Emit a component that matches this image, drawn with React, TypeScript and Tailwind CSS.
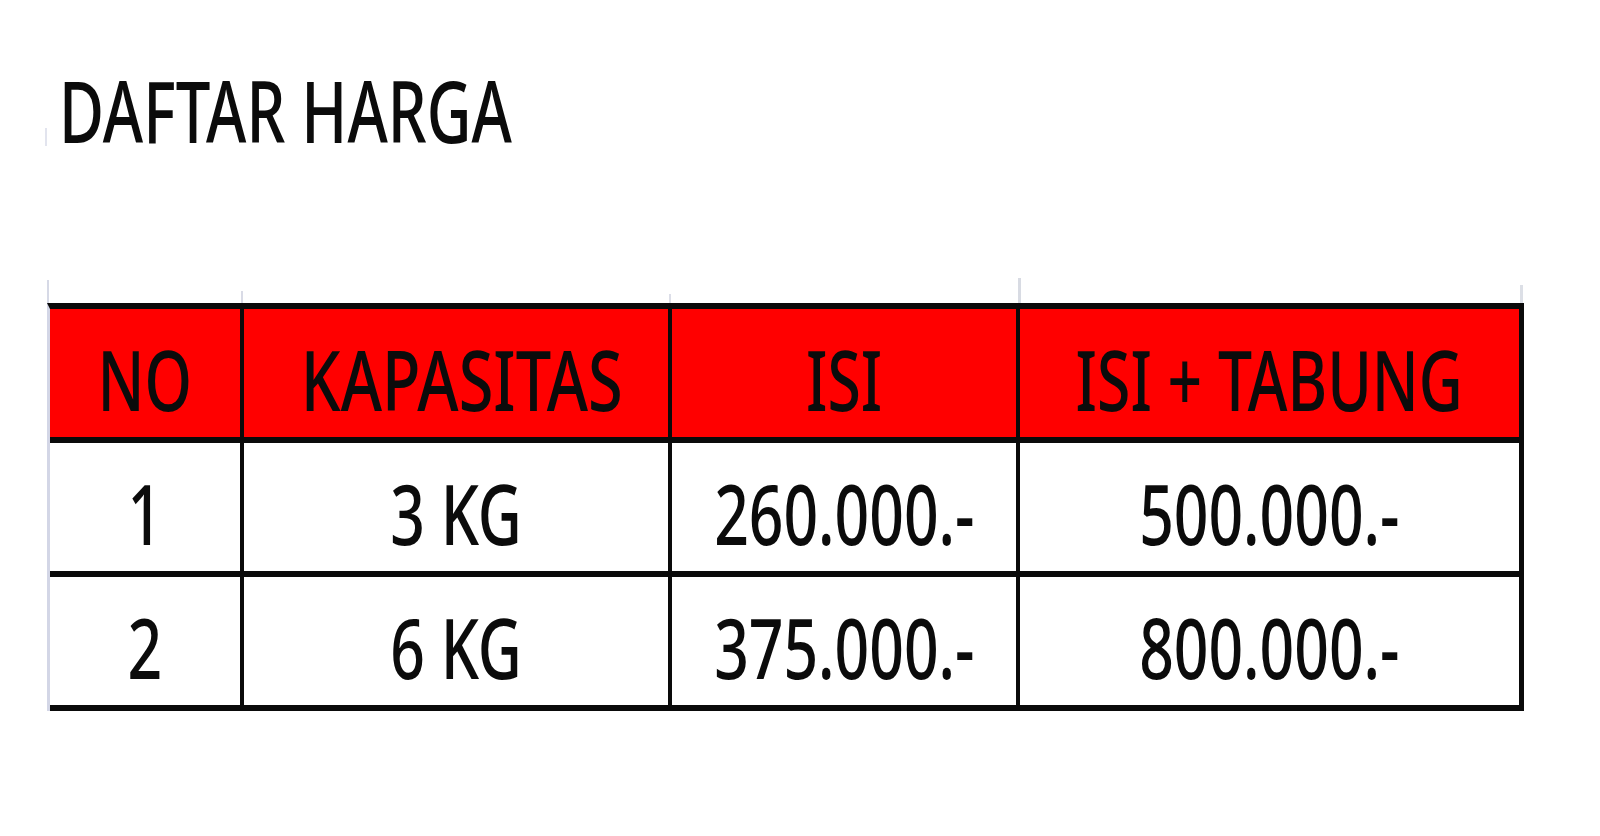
import React from "react";

const rows = [
  ["1", "3 KG", "260.000.-", "500.000.-"],
  ["2", "6 KG", "375.000.-", "800.000.-"],
];

const headers = ["NO", "KAPASITAS", "ISI", "ISI + TABUNG"];

function Cell({ children, last, header, wide }: { children: React.ReactNode; last?: boolean; header?: boolean; wide?: boolean }) {
  return (
    <div
      className={
        "flex items-center justify-center pt-[10px] overflow-hidden " +
        (last ? "" : "border-r-4 border-r-[#0a0a0a] ") +
        (header ? "bg-[#ff0000]" : "bg-white")
      }
    >
      <span
        className={
          "inline-block whitespace-nowrap leading-none text-[83px] font-medium text-[#0b0b0b] " +
          (wide ? "scale-x-[0.76] translate-x-[6px]" : "scale-x-[0.73]")
        }
      >
        {children}
      </span>
    </div>
  );
}

export default function App() {
  return (
    <div
      className="w-[1600px] h-[836px] bg-white overflow-hidden"
      style={{ fontFamily: '"Noto Sans", "Open Sans", sans-serif' }}
    >
      <div className="pt-[68px] pl-[45px] flex items-end">
        <div className="w-[2px] h-[18px] mb-[6px] bg-[#e2e4ee]" />
        <h1 className="ml-[12px] h-[84px] leading-none text-[85px] font-medium text-[#0b0b0b] whitespace-nowrap origin-left scale-x-[0.725]">
          DAFTAR HARGA
        </h1>
      </div>

      <div className="mt-[126px] ml-[47px] w-[1477px]">
        {/* faint spreadsheet gridlines above the table */}
        <div className="grid grid-cols-[197px_428px_348px_1fr] h-[25px]">
          <div className="flex items-end"><div className="w-[2px] h-[23px] bg-[#d6d9e6]" /></div>
          <div className="flex items-end -ml-[3px]"><div className="w-[2px] h-[12px] bg-[#d9dbe6]" /></div>
          <div className="flex items-end -ml-[3px]"><div className="w-[2px] h-[9px] bg-[#dcdee8]" /></div>
          <div className="flex items-end justify-between -ml-[2px]">
            <div className="w-[3px] h-[25px] bg-[#d8dbe3]" />
            <div className="w-[3px] h-[18px] bg-[#dcdfe6] mr-[1px]" />
          </div>
        </div>

        <div className="border-l-[3px] border-l-[#d3d6e6] border-r-[5px] border-r-[#0a0a0a] border-t-[6px] border-t-[#0a0a0a]">
          <div className="grid grid-cols-[194px_428px_348px_1fr] h-[134px] border-b-[6px] border-b-[#0a0a0a]">
            {headers.map((h, i) => (
              <Cell key={h} header wide={i === 1} last={i === headers.length - 1}>
                {h}
              </Cell>
            ))}
          </div>
          {rows.map((r) => (
            <div
              key={r[0]}
              className="grid grid-cols-[194px_428px_348px_1fr] h-[134px] border-b-[6px] border-b-[#0a0a0a]"
            >
              {r.map((c, i) => (
                <Cell key={i} last={i === r.length - 1}>
                  {c}
                </Cell>
              ))}
            </div>
          ))}
        </div>
      </div>
    </div>
  );
}
